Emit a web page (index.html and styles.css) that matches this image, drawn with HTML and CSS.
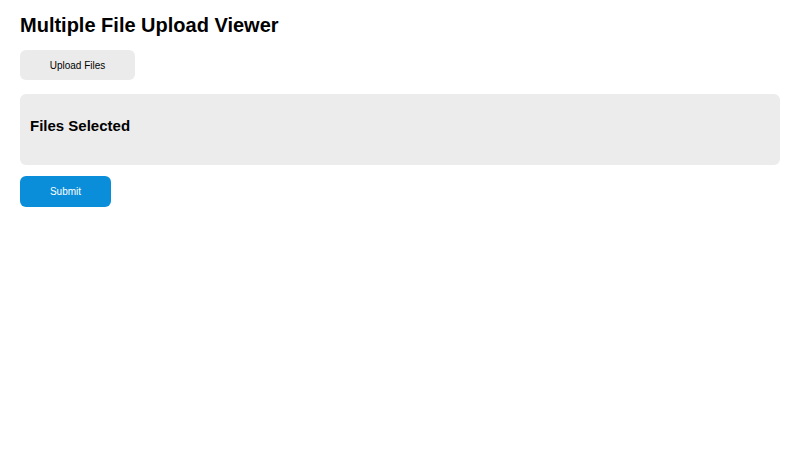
FILE: index.html
```html
<!DOCTYPE html>
<html lang="en">
<head>
<meta charset="utf-8">
<title>Multiple File Upload Viewer</title>
<link rel="stylesheet" href="styles.css">
</head>
<body>
<div class="app">
  <h1 class="title">Multiple File Upload Viewer</h1>
  <button class="upload-btn" type="button">Upload Files</button>
  <section class="panel">
    <h3 class="panel-title">Files Selected</h3>
    <ul class="file-list"></ul>
  </section>
  <button class="submit-btn" type="button">Submit</button>
</div>
</body>
</html>
```
FILE: styles.css
```css
html, body {
  margin: 0;
  padding: 0;
  background: #ffffff;
}
body {
  font-family: "Liberation Sans", Arial, sans-serif;
  color: #000;
}
.app {
  padding: 0 20px;
  display: flex;
  flex-direction: column;
  align-items: flex-start;
}
.title {
  font-size: 20px;
  font-weight: bold;
  line-height: 23px;
  margin: 13.5px 0 13.5px;
}
.upload-btn {
  font-family: inherit;
  font-size: 10px;
  color: #000;
  background: #ebebeb;
  border: none;
  border-radius: 6px;
  width: 115px;
  height: 30px;
  padding: 0;
}
.panel {
  align-self: stretch;
  margin-top: 14px;
  background: #ececec;
  border-radius: 6px;
  padding: 10px;
  height: 71px;
  box-sizing: border-box;
}
.panel-title {
  font-size: 15px;
  font-weight: bold;
  line-height: 17px;
  margin: 12.5px 0 0;
}
.file-list {
  margin: 0;
  padding: 0;
  list-style: none;
}
.submit-btn {
  margin-top: 11px;
  font-family: inherit;
  font-size: 10px;
  color: #ffffff;
  background: #0a8ed9;
  border: none;
  border-radius: 6px;
  width: 91px;
  height: 31px;
  padding: 0;
}
```
